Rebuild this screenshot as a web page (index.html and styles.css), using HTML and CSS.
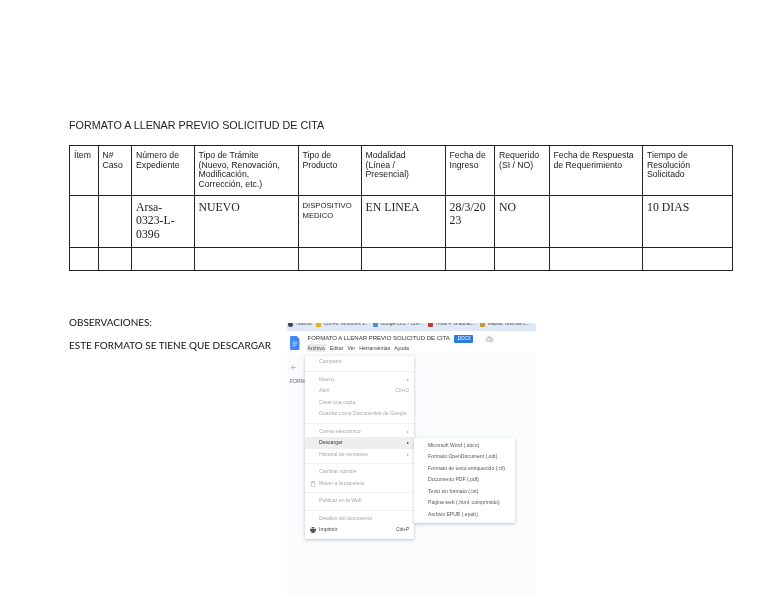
FILE: index.html
```html
<!DOCTYPE html>
<html lang="es">
<head>
    <meta charset="UTF-8">
    <meta name="viewport" content="width=device-width, initial-scale=1.0">
    <title>Formato a llenar previo solicitud de cita</title>
    <link rel="stylesheet" href="styles.css">
</head>
<body>
    <div class="page">
        <h1 class="title">FORMATO A LLENAR PREVIO SOLICITUD DE CITA</h1>

        <table class="form-table">
            <colgroup>
                <col class="c1"><col class="c2"><col class="c3"><col class="c4"><col class="c5">
                <col class="c6"><col class="c7"><col class="c8"><col class="c9"><col class="c10">
            </colgroup>
            <tr class="row-head">
                <th>Ítem</th>
                <th>N#<br>Caso</th>
                <th>Número de Expediente</th>
                <th>Tipo de Trámite<br>(Nuevo, Renovación, Modificación, Corrección, etc.)</th>
                <th>Tipo de Producto</th>
                <th>Modalidad<br>(Línea /<br>Presencial)</th>
                <th>Fecha de Ingreso</th>
                <th>Requerido (SI / NO)</th>
                <th>Fecha de Respuesta de Requerimiento</th>
                <th>Tiempo de Resolución Solicitado</th>
            </tr>
            <tr class="row-data">
                <td></td>
                <td></td>
                <td>Arsa-<br>0323-L-<br>0396</td>
                <td>NUEVO</td>
                <td class="small">DISPOSITIVO MEDICO</td>
                <td>EN LINEA</td>
                <td>28/3/20<br>23</td>
                <td>NO</td>
                <td></td>
                <td>10 DIAS</td>
            </tr>
            <tr class="row-empty">
                <td></td><td></td><td></td><td></td><td></td><td></td><td></td><td></td><td></td><td></td>
            </tr>
        </table>

        <div class="bottom">
            <div class="notes">
                <p>OBSERVACIONES:</p>
                <p>ESTE FORMATO SE TIENE QUE DESCARGAR</p>
            </div>

            <div class="shot">
                <div class="bookmarks">
                    <span><i class="dot dark"></i>Hábitos</span>
                    <span><i class="dot yellow"></i>Correo: Windows 1...</span>
                    <span><i class="dot blue"></i>Google LLC - Con...</span>
                    <span><i class="dot red"></i>Tribal F. Graduac...</span>
                    <span><i class="dot orange"></i>Mapas, Noticias L...</span>
                </div>
                <div class="doc-head">
                    <svg class="doc-icon" viewBox="0 0 10 15">
                        <path d="M0 1a1 1 0 0 1 1-1h6l3 3v11a1 1 0 0 1-1 1H1a1 1 0 0 1-1-1z" fill="#4285f4"/>
                        <path d="M2.5 6.5h5M2.5 8.5h5M2.5 10.5h3.5" stroke="#dce8fc" stroke-width=".8"/>
                    </svg>
                    <div>
                        <div class="doc-title">
                            <span>FORMATO A LLENAR PREVIO SOLICITUD DE CITA</span>
                            <b class="badge">.DOCX</b>
                            <svg class="cloud" viewBox="0 0 10 8">
                                <path d="M2.5 7a2 2 0 0 1-.3-4A3 3 0 0 1 8 3.2 1.9 1.9 0 0 1 7.8 7zM3.5 1.5l4 5" fill="none" stroke="#6a6f75" stroke-width=".8"/>
                            </svg>
                        </div>
                        <div class="doc-menu">
                            <span class="active">Archivo</span><span>Editar</span><span>Ver</span><span>Herramientas</span><span>Ayuda</span>
                        </div>
                    </div>
                </div>
                <div class="doc-body">
                    <div class="outline">
                        <svg class="back" viewBox="0 0 8 8">
                            <path d="M7 4H1.5M4 1.5 1.5 4 4 6.5" fill="none" stroke="#9aa0a6" stroke-width=".8"/>
                        </svg>
                        <span>FORMATO</span>
                    </div>
                    <div class="sheet"></div>

                    <ul class="menu main-menu">
                        <li class="off">Compartir</li>
                        <li class="sep"></li>
                        <li class="off">Nuevo<em>▸</em></li>
                        <li class="off">Abrir<small>Ctrl+O</small></li>
                        <li class="off">Crear una copia</li>
                        <li class="off">Guardar como Documentos de Google</li>
                        <li class="sep"></li>
                        <li class="off">Correo electrónico<em>▸</em></li>
                        <li class="open">Descargar<em>▸</em></li>
                        <li class="off">Historial de versiones<em>▸</em></li>
                        <li class="sep"></li>
                        <li class="off">Cambiar nombre</li>
                        <li class="off has-icon">
                            <svg class="item-icon" viewBox="0 0 6 7"><path d="M1 1.5h4v5H1zM.5 1h5M2 .5h2" fill="none" stroke="#9aa0a6" stroke-width=".6"/></svg>
                            Mover a la papelera
                        </li>
                        <li class="sep"></li>
                        <li class="off">Publicar en la Web</li>
                        <li class="sep"></li>
                        <li class="off">Detalles del documento</li>
                        <li class="has-icon">
                            <svg class="item-icon" viewBox="0 0 7 7"><path d="M2 0h3v1.5H2zM0 2h7v3H5.5v2h-4V5H0z" fill="#55595e"/></svg>
                            Imprimir<small>Ctrl+P</small>
                        </li>
                    </ul>

                    <ul class="menu sub-menu">
                        <li>Microsoft Word (.docx)</li>
                        <li>Formato OpenDocument (.odt)</li>
                        <li>Formato de texto enriquecido (.rtf)</li>
                        <li>Documento PDF (.pdf)</li>
                        <li>Texto sin formato (.txt)</li>
                        <li>Página web (.html, comprimido)</li>
                        <li>Archivo EPUB (.epub)</li>
                    </ul>
                </div>
            </div>
        </div>
    </div>
</body>
</html>
```

FILE: styles.css
```css
html, body { margin: 0; height: 594px; overflow: hidden; background: white; }
.page { padding: 118px 36px 0 69px; font-family: "Liberation Sans", Arial, sans-serif; color: #222; }
.title { margin: 0 0 13px; font-size: 10.75px; line-height: 14px; font-weight: normal; filter: blur(0.25px); }

.form-table { width: 663px; border-collapse: collapse; table-layout: fixed; filter: blur(0.25px); }
.form-table th, .form-table td { border: 1px solid #222; padding: 5px 3px 0 4px; vertical-align: top; text-align: left; overflow: hidden; }
.form-table th { font-size: 8.7px; line-height: 9.5px; font-weight: normal; }
.form-table td { font-family: "Liberation Serif", serif; font-size: 11.8px; line-height: 13.5px; padding-top: 4.5px; }
.form-table td.small { font-family: "Liberation Sans", sans-serif; font-size: 7.7px; line-height: 9.5px; padding-top: 5px; }
.row-head { height: 50px; }
.row-data { height: 52px; }
.row-empty { height: 23px; }
.c1 { width: 28.5px; }
.c2 { width: 33.5px; }
.c3 { width: 62.5px; }
.c4 { width: 104px; }
.c5 { width: 63px; }
.c6 { width: 84px; }
.c7 { width: 49.5px; }
.c8 { width: 54.5px; }
.c9 { width: 93.5px; }
.c10 { width: 90px; }

.bottom { display: flex; margin-top: 52px; }
.notes { width: 218px; flex: none; font-family: Lato, sans-serif; font-size: 9.95px; color: #111; filter: blur(0.2px); }
.notes p { margin: 0 0 10px; line-height: 13px; position: relative; top: -7px; }

/* screenshot of the editor pasted in the document */
.shot { width: 249px; height: 271px; flex: none; display: flex; flex-direction: column; background: #f9fbfd; overflow: hidden; filter: blur(0.4px); }

.bookmarks { height: 8px; flex: none; display: flex; align-items: flex-start; gap: 4.5px; padding-left: 1px; background: #dfe8f6; font-size: 4.8px; line-height: 6px; color: #555; white-space: nowrap; overflow: hidden; }
.bookmarks span { display: flex; align-items: center; gap: 2.5px; margin-top: -2px; }
.dot { width: 5px; height: 5px; display: block; border-radius: 1px; }
.dark { background: #445; border-radius: 50%; }
.yellow { background: #e8b020; }
.blue { background: #4a90d9; }
.red { background: #c5392f; }
.orange { background: #c9963a; }

.doc-head { height: 19px; flex: none; display: flex; gap: 8px; padding: 3px 0 0 3px; background: white; }
.doc-icon { width: 9.5px; height: 14px; flex: none; margin-top: 2px; }
.doc-title { display: flex; align-items: center; font-size: 6px; line-height: 9px; color: #333; white-space: nowrap; }
.badge { margin-left: 4px; padding: 0 2.5px; background: #2b7de0; border-radius: 1px; color: white; font-size: 4.6px; line-height: 8px; font-weight: normal; }
.cloud { width: 7px; height: 6px; margin-left: 13px; }
.doc-menu { display: flex; gap: 4px; margin-top: 1px; font-size: 5.2px; line-height: 8px; color: #444; }
.doc-menu .active { margin-left: -1px; padding: 0 1px; background: #e9ebee; }

.doc-body { flex: 1; position: relative; display: flex; }
.outline { width: 18px; flex: none; padding: 11px 0 0 3px; font-size: 5px; color: #666; white-space: nowrap; overflow: hidden; box-sizing: border-box; }
.back { width: 7px; height: 7px; display: block; margin-bottom: 7px; }
.sheet { flex: 1; }

.menu { position: absolute; margin: 0; padding: 0; list-style: none; background: white; box-shadow: 0 1px 3px rgba(60,64,67,0.3); font-size: 5.1px; color: #444; white-space: nowrap; }
.menu li { height: 11.5px; line-height: 11.5px; padding: 0 5px 0 14px; display: flex; align-items: center; position: relative; }
.menu li.sep { height: 6px; padding: 0; }
.menu li.sep::after { content: ""; position: absolute; left: 0; right: 0; top: 3px; height: 1px; background: #f0f1f3; }
.menu li.off { color: #a3a7ab; }
.menu li.open { background: #eceef0; color: #333; }
.menu em { margin-left: auto; font-style: normal; font-size: 4px; }
.menu small { margin-left: auto; font-size: 4.6px; }
.main-menu { left: 18px; top: 3px; width: 109px; padding-bottom: 3px; }
.item-icon { position: absolute; left: 5px; top: 3px; width: 6px; height: 6px; }
.sub-menu { left: 127px; top: 84.5px; width: 101px; padding: 2.5px 0; }
.sub-menu li { height: 11.45px; padding-left: 14px; color: #555; }
```
